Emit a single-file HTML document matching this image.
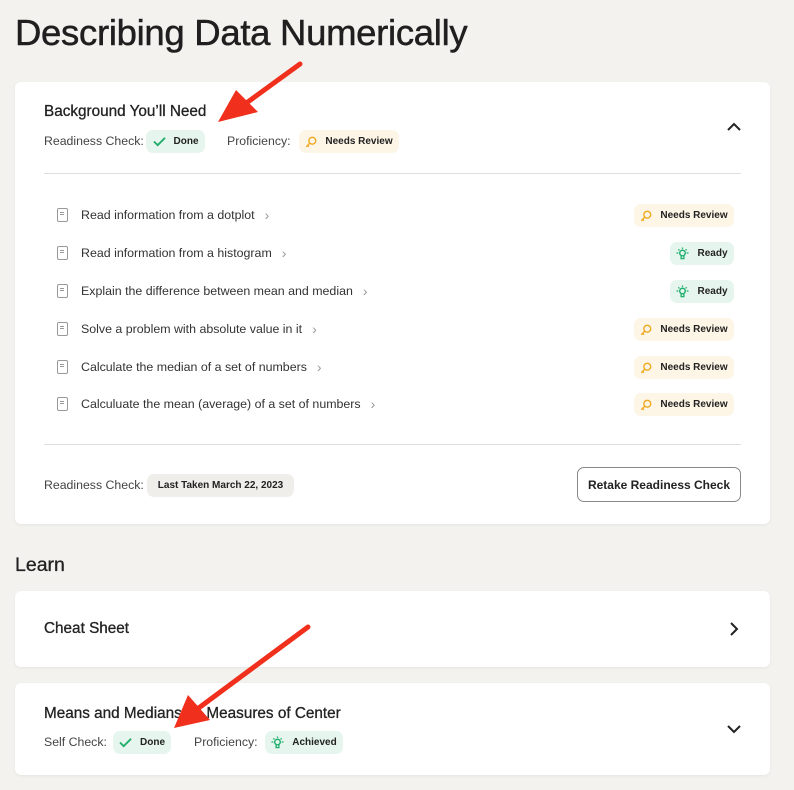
<!DOCTYPE html>
<html><head><meta charset="utf-8"><style>
body{margin:0;width:794px;height:790px;background:#f3f2ee;font-family:"Liberation Sans",sans-serif;color:#222;position:relative;overflow:hidden}
.a{position:absolute;white-space:nowrap}
.card{position:absolute;left:15px;width:755px;background:#fff;border-radius:6px;box-shadow:0 1px 3px rgba(0,0,0,.06)}
.t{position:absolute;font-size:15.3px;color:#222;white-space:nowrap;-webkit-text-stroke:0.3px #222}
.lbl{font-size:12.3px;color:#444}
.pill{position:absolute;height:23px;border-radius:7px;font-size:10px;font-weight:bold;display:flex;align-items:center;justify-content:center;box-sizing:border-box;padding:0;color:#222;white-space:nowrap}
.pill span{margin-left:6px}
.g{background:#e6f5ee}.y{background:#fdf5e6}
.item{position:absolute;left:57px;top:0;font-size:12.4px;color:#333;display:flex;align-items:center;white-space:nowrap}
.doc{width:11px;height:14px;border:1.3px solid #999;border-radius:2px;margin-right:13px;box-sizing:border-box;position:relative}
.doc:after{content:"";position:absolute;left:2px;top:3px;width:4px;height:1px;background:#999;box-shadow:0 2px 0 #999}
.chev{margin-left:10px;color:#999;font-size:14px}
hr{position:absolute;left:44px;width:697px;border:0;border-top:1px solid #ddd;margin:0}
svg{flex:none}
</style></head><body>
<div class="a" style="left:15px;top:12px;font-size:36.5px;color:#1f1f1f;letter-spacing:-0.3px;-webkit-text-stroke:0.5px #1f1f1f">Describing Data Numerically</div>

<div class="card" style="top:82px;height:442px"></div>
<div class="t" style="left:44px;top:103px">Background You’ll Need</div>
<div class="a lbl" style="left:44px;top:134px">Readiness Check:</div>
<div class="pill g" style="left:146px;top:130px;width:59px"><svg width="13" height="11" viewBox="0 0 14 12"><path d="M1 6l4 4 8-8" stroke="#1fae6c" stroke-width="2" fill="none"/></svg><span style="margin-left:8px">Done</span></div>
<div class="a lbl" style="left:227px;top:134px">Proficiency:</div>
<div class="pill y" style="left:299px;top:130px;width:100px"><svg width="12" height="12" viewBox="0 0 14 14"><circle cx="8.5" cy="5.5" r="4" stroke="#f0a820" stroke-width="1.6" fill="none"/><path d="M5.5 8.5L1.5 12.5M3 11l1.5 1.5" stroke="#f0a820" stroke-width="1.6" fill="none"/></svg><span style="margin-left:8px">Needs Review</span></div>
<svg class="a" style="left:727px;top:122px" width="14" height="10"><path d="M1 8l6-6 6 6" stroke="#222" stroke-width="2" fill="none"/></svg>
<hr style="top:173px">

<div class="item" style="top:207px"><div class="doc"></div>Read information from a dotplot<span class="chev">›</span></div>
<div class="item" style="top:245px"><div class="doc"></div>Read information from a histogram<span class="chev">›</span></div>
<div class="item" style="top:283px"><div class="doc"></div>Explain the difference between mean and median<span class="chev">›</span></div>
<div class="item" style="top:321px"><div class="doc"></div>Solve a problem with absolute value in it<span class="chev">›</span></div>
<div class="item" style="top:359px"><div class="doc"></div>Calculate the median of a set of numbers<span class="chev">›</span></div>
<div class="item" style="top:396px"><div class="doc"></div>Calculuate the mean (average) of a set of numbers<span class="chev">›</span></div>

<div class="pill y" style="left:634px;top:204px;width:100px"><svg width="12" height="12" viewBox="0 0 14 14"><circle cx="8.5" cy="5.5" r="4" stroke="#f0a820" stroke-width="1.6" fill="none"/><path d="M5.5 8.5L1.5 12.5M3 11l1.5 1.5" stroke="#f0a820" stroke-width="1.6" fill="none"/></svg><span style="margin-left:8px">Needs Review</span></div>
<div class="pill g" style="left:670px;top:242px;width:64px"><svg width="13" height="13" viewBox="0 0 14 14"><circle cx="7" cy="6.5" r="3" stroke="#1fae6c" stroke-width="1.5" fill="none"/><path d="M5.5 9.5v3h3v-3M7 0.5v1.5M0.5 6.5H2.5M11.5 6.5h2M2.5 2.5l1.2 1.2M11.5 2.5l-1.2 1.2" stroke="#1fae6c" stroke-width="1.4" fill="none"/></svg><span style="margin-left:8px">Ready</span></div>
<div class="pill g" style="left:670px;top:280px;width:64px"><svg width="13" height="13" viewBox="0 0 14 14"><circle cx="7" cy="6.5" r="3" stroke="#1fae6c" stroke-width="1.5" fill="none"/><path d="M5.5 9.5v3h3v-3M7 0.5v1.5M0.5 6.5H2.5M11.5 6.5h2M2.5 2.5l1.2 1.2M11.5 2.5l-1.2 1.2" stroke="#1fae6c" stroke-width="1.4" fill="none"/></svg><span style="margin-left:8px">Ready</span></div>
<div class="pill y" style="left:634px;top:318px;width:100px"><svg width="12" height="12" viewBox="0 0 14 14"><circle cx="8.5" cy="5.5" r="4" stroke="#f0a820" stroke-width="1.6" fill="none"/><path d="M5.5 8.5L1.5 12.5M3 11l1.5 1.5" stroke="#f0a820" stroke-width="1.6" fill="none"/></svg><span style="margin-left:8px">Needs Review</span></div>
<div class="pill y" style="left:634px;top:356px;width:100px"><svg width="12" height="12" viewBox="0 0 14 14"><circle cx="8.5" cy="5.5" r="4" stroke="#f0a820" stroke-width="1.6" fill="none"/><path d="M5.5 8.5L1.5 12.5M3 11l1.5 1.5" stroke="#f0a820" stroke-width="1.6" fill="none"/></svg><span style="margin-left:8px">Needs Review</span></div>
<div class="pill y" style="left:634px;top:393px;width:100px"><svg width="12" height="12" viewBox="0 0 14 14"><circle cx="8.5" cy="5.5" r="4" stroke="#f0a820" stroke-width="1.6" fill="none"/><path d="M5.5 8.5L1.5 12.5M3 11l1.5 1.5" stroke="#f0a820" stroke-width="1.6" fill="none"/></svg><span style="margin-left:8px">Needs Review</span></div>

<hr style="top:444px">
<div class="a lbl" style="left:44px;top:478px">Readiness Check:</div>
<div class="pill" style="left:147px;top:474px;width:147px;background:#efeeea">Last Taken March 22, 2023</div>
<div class="a" style="left:577px;top:467px;width:164px;height:35px;box-sizing:border-box;border:1.5px solid #888;border-radius:7px;font-size:12px;font-weight:bold;display:flex;align-items:center;justify-content:center">Retake Readiness Check</div>

<div class="a" style="left:15px;top:554px;font-size:19.5px;-webkit-text-stroke:0.3px #222">Learn</div>
<div class="card" style="top:591px;height:76px"></div>
<div class="t" style="left:44px;top:620px">Cheat Sheet</div>
<svg class="a" style="left:729px;top:622px" width="10" height="14"><path d="M2 1l6 6-6 6" stroke="#222" stroke-width="2" fill="none"/></svg>

<div class="card" style="top:683px;height:92px"></div>
<div class="t" style="left:44px;top:705px">Means and Medians as Measures of Center</div>
<div class="a lbl" style="left:44px;top:735px">Self Check:</div>
<div class="pill g" style="left:113px;top:731px;width:58px"><svg width="13" height="11" viewBox="0 0 14 12"><path d="M1 6l4 4 8-8" stroke="#1fae6c" stroke-width="2" fill="none"/></svg><span style="margin-left:8px">Done</span></div>
<div class="a lbl" style="left:194px;top:735px">Proficiency:</div>
<div class="pill g" style="left:265px;top:731px;width:78px"><svg width="13" height="13" viewBox="0 0 14 14"><circle cx="7" cy="6.5" r="3" stroke="#1fae6c" stroke-width="1.5" fill="none"/><path d="M5.5 9.5v3h3v-3M7 0.5v1.5M0.5 6.5H2.5M11.5 6.5h2M2.5 2.5l1.2 1.2M11.5 2.5l-1.2 1.2" stroke="#1fae6c" stroke-width="1.4" fill="none"/></svg><span style="margin-left:8px">Achieved</span></div>
<svg class="a" style="left:727px;top:724px" width="14" height="10"><path d="M1 2l6 6 6-6" stroke="#222" stroke-width="2" fill="none"/></svg>

<svg class="a" style="left:0;top:0" width="794" height="790">
<line x1="300" y1="64" x2="245" y2="104" stroke="#f0301c" stroke-width="5" stroke-linecap="round"/>
<polygon points="218,122 236,90 258,112" fill="#f0301c"/>
<line x1="308" y1="627" x2="196" y2="710" stroke="#f0301c" stroke-width="5" stroke-linecap="round"/>
<polygon points="174,728 188,695 210,720" fill="#f0301c"/>
</svg>
</body></html>
